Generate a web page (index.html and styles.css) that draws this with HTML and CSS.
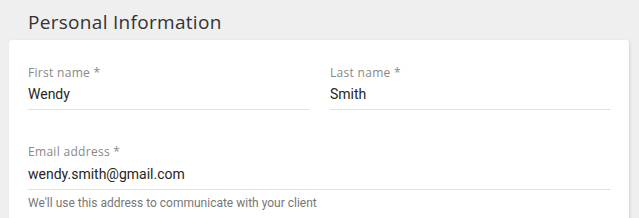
FILE: index.html
```html
<!DOCTYPE html>
<html lang="en">
<head>
  <meta charset="UTF-8" />
  <meta name="viewport" content="width=device-width, initial-scale=1.0" />
  <title>Personal Information</title>
  <link rel="stylesheet" href="styles.css">
</head>
<body>
  <h2 class="section-title">Personal Information</h2>

  <div class="card">
    <div class="row">
      <div class="field">
        <label class="field-label">First name *</label>
        <div class="field-input">Wendy</div>
      </div>
      <div class="field">
        <label class="field-label">Last name *</label>
        <div class="field-input">Smith</div>
      </div>
    </div>

    <div class="field field-email">
      <label class="field-label">Email address *</label>
      <div class="field-input">wendy.smith@gmail.com</div>
      <div class="field-hint">We'll use this address to communicate with your client</div>
    </div>
  </div>
</body>
</html>
```

FILE: styles.css
```css
body {
  margin: 0;
  padding: 0 10px 0 9px;
  background-color: #efefef;
  font-family: Roboto, sans-serif;
  color: #222;
  overflow: hidden;
  height: 218px;
}

.section-title {
  margin: 0;
  padding: 9px 0 0 19px;
  height: 31px;
  font-family: "Open Sans", sans-serif;
  font-weight: 400;
  font-size: 19px;
  color: #333;
  letter-spacing: 0.3px;
}

.card {
  background: #fff;
  border-radius: 3px;
  box-shadow: 1px 1px 3px rgba(0,0,0,0.12);
  padding: 24px 18px 20px 19px;
  min-height: 200px;
}

.row {
  display: flex;
  gap: 21px;
}

.row .field {
  flex: 1;
}

.field-label {
  display: block;
  font-family: "Open Sans", sans-serif;
  font-size: 12px;
  color: #888;
  letter-spacing: 0.3px;
  line-height: 17px;
}

.field-input {
  font-size: 14px;
  line-height: 20px;
  color: #262626;
  padding: 3px 0 5px;
  border-bottom: 1px solid #e0e0e0;
}

.field-email {
  margin-top: 33px;
}

.field-email .field-input {
  padding-top: 4px;
}

.field-hint {
  font-size: 12px;
  color: #777;
  line-height: 16px;
  margin-top: 5px;
}
```
